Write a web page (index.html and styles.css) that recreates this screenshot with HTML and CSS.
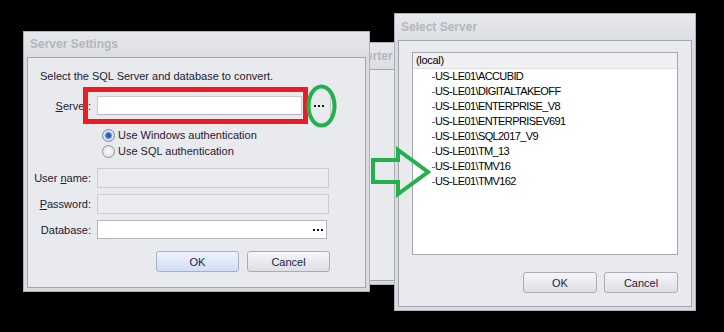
FILE: index.html
```html
<!DOCTYPE html>
<html lang="en">
<head>
<meta charset="UTF-8" />
<meta name="viewport" content="width=device-width, initial-scale=1" />
<title>Server Settings</title>
<link rel="stylesheet" href="styles.css">
</head>
<body>

<div class="desktop">

  <div class="win win-back">
    <div class="win-title">Converter</div>
    <div class="panel"></div>
  </div>

  <div class="win win-settings">
    <div class="win-title">Server Settings</div>
    <div class="panel">
      <p class="intro">Select the SQL Server and database to convert.</p>

      <div class="row">
        <span class="lbl"><u>S</u>erver:</span>
        <div class="box box-server"></div>
        <span class="browse"><span class="dots"></span></span>
      </div>

      <div class="auth">
        <div class="radio on"><span class="dot"></span>Use Windows authentication</div>
        <div class="radio"><span class="dot"></span>Use SQL authentication</div>
      </div>

      <div class="row row-user">
        <span class="lbl">User <u>n</u>ame:</span>
        <div class="box off"></div>
      </div>
      <div class="row">
        <span class="lbl"><u>P</u>assword:</span>
        <div class="box off"></div>
      </div>
      <div class="row">
        <span class="lbl">Database:</span>
        <div class="box box-db"><span class="dots"></span></div>
      </div>

      <div class="actions">
        <button class="btn btn-default">OK</button>
        <button class="btn">Cancel</button>
      </div>
    </div>
  </div>

  <div class="win win-select">
    <div class="win-title">Select Server</div>
    <div class="panel">
      <div class="list">
        <div class="list-head">(local)</div>
        <div class="item">US-LE01\ACCUBID</div>
        <div class="item">US-LE01\DIGITALTAKEOFF</div>
        <div class="item">US-LE01\ENTERPRISE_V8</div>
        <div class="item">US-LE01\ENTERPRISEV691</div>
        <div class="item">US-LE01\SQL2017_V9</div>
        <div class="item">US-LE01\TM_13</div>
        <div class="item">US-LE01\TMV16</div>
        <div class="item">US-LE01\TMV162</div>
      </div>
      <div class="actions actions-select">
        <button class="btn btn-small">OK</button>
        <button class="btn btn-small">Cancel</button>
      </div>
    </div>
  </div>

  <!-- annotations drawn over the screenshot -->
  <svg class="marks" width="724" height="332" viewBox="0 0 724 332">
    <rect x="85.5" y="89.5" width="220" height="32" fill="none" stroke="#ed1c24" stroke-width="5" />
    <ellipse cx="321.5" cy="106" rx="13" ry="19.5" fill="none" stroke="#22b14c" stroke-width="4" />
    <polygon points="373,160 398,160 398,150 428,172 398,194 398,182 373,182" fill="none" stroke="#22b14c" stroke-width="4" />
  </svg>

</div>

</body>
</html>
```

FILE: styles.css
```css
body {
  margin: 0;
  background-color: #000;
  font-family: "Liberation Sans", Arial, sans-serif;
  font-size: 11px;
  color: #1c2033;
}
.desktop {
  position: relative;
  width: 724px;
  height: 332px;
  overflow: hidden;
}

/* windows */
.win {
  position: absolute;
  box-sizing: border-box;
  display: flex;
  flex-direction: column;
  border: 1px solid #aeb1ba;
  background-color: #d9dbe1;
}
.win-title {
  height: 25px;
  line-height: 25px;
  padding-left: 6px;
  font-size: 12px;
  font-weight: bold;
  color: #b3b6be;
  background: linear-gradient(#e7e8ec, #dcdee3);
  white-space: nowrap;
}
.panel {
  flex: 1;
  margin: 0 3px 3px;
  border: 1px solid #a2a5ad;
  background-color: #e9eaee;
}
.win-back {
  left: 300px;
  top: 42px;
  width: 120px;
  height: 243px;
}
.win-back .win-title {
  height: 26px;
  line-height: 26px;
  padding-left: 35px;
}
.win-settings {
  left: 23px;
  top: 31px;
  width: 347px;
  height: 261px;
}
.win-select {
  left: 394px;
  top: 13px;
  width: 302px;
  height: 298px;
}
.win-select .win-title {
  height: 26px;
  line-height: 26px;
}

/* settings form */
.intro {
  margin: 11px 0 0 12px;
  line-height: 14px;
}
.row {
  display: flex;
  align-items: center;
  margin-top: 7px;
  height: 19px;
}
.intro + .row {
  margin-top: 13px;
}
.row-user {
  margin-top: 9px;
}
.lbl {
  width: 63px;
  margin-right: 6px;
  text-align: right;
  white-space: nowrap;
}
.box {
  position: relative;
  box-sizing: border-box;
  width: 232px;
  height: 19px;
  border: 1px solid #b3b6bd;
  background-color: #fff;
}
.box.off {
  height: 20px;
  border-color: #cbcdd2;
  background-color: #ebebed;
}
.box-server {
  width: 205px;
  border-color: #c9cbd0;
  border-bottom-color: #b5b7bd;
}
.box-db {
  width: 230px;
}
.browse {
  position: relative;
  box-sizing: border-box;
  width: 21px;
  height: 20px;
  margin-left: 8px;
  border-right: 1px solid #c8cad0;
}
.dots {
  position: absolute;
  top: 9px;
  width: 2px;
  height: 2px;
  background-color: #1a1a1a;
  box-shadow: 4px 0 #1a1a1a, 8px 0 #1a1a1a;
}
.browse .dots {
  left: 4px;
}
.box-db .dots {
  right: 11px;
  top: 8px;
}

.auth {
  margin: 12px 0 0 74px;
}
.radio {
  display: flex;
  align-items: center;
  height: 16px;
  line-height: 16px;
}
.radio .dot {
  box-sizing: border-box;
  width: 13px;
  height: 13px;
  margin-right: 3px;
  border: 1px solid #8d919b;
  border-radius: 50%;
  background: radial-gradient(circle, #fbfbfc 0, #dfe1e6 6px);
}
.radio.on .dot {
  border-color: #6c86b6;
  background: radial-gradient(circle, #2d5db7 0 2px, #7fa3e3 3.2px, #e9eef8 4.4px, #d6dae3 6px);
}

.actions {
  display: flex;
  justify-content: flex-end;
  gap: 8px;
  margin-top: 12px;
  padding-right: 35px;
}
.btn {
  box-sizing: border-box;
  width: 83px;
  height: 21px;
  padding: 0;
  border: 1px solid #a9acb4;
  border-radius: 3px;
  background: linear-gradient(#f6f6f8, #dedfe4);
  font-family: "Liberation Sans", Arial, sans-serif;
  font-size: 11px;
  color: #1c2345;
}
.btn-default {
  border-color: #a7b0c4;
  background: linear-gradient(#edf2fc, #d2def5);
}

/* server list */
.win-select .panel {
  padding: 11px 13px 0;
}
.list {
  box-sizing: border-box;
  height: 203px;
  border: 1px solid #a4a7ae;
  background-color: #fff;
  color: #000;
}
.list-head {
  height: 15px;
  line-height: 15px;
  padding-left: 3px;
  border-bottom: 1px solid #dcdee2;
  background-color: #f0f0f2;
  letter-spacing: -0.3px;
}
.item {
  position: relative;
  height: 15px;
  line-height: 15px;
  padding-left: 22px;
  letter-spacing: -0.6px;
  white-space: nowrap;
}
.item::before {
  content: "";
  position: absolute;
  left: 19px;
  top: 8px;
  width: 3px;
  height: 1px;
  background-color: #707070;
}
.actions-select {
  gap: 7px;
  margin-top: 17px;
  padding-right: 0;
}
.btn-small {
  width: 74px;
}

.marks {
  position: absolute;
  left: 0;
  top: 0;
  pointer-events: none;
}
```
